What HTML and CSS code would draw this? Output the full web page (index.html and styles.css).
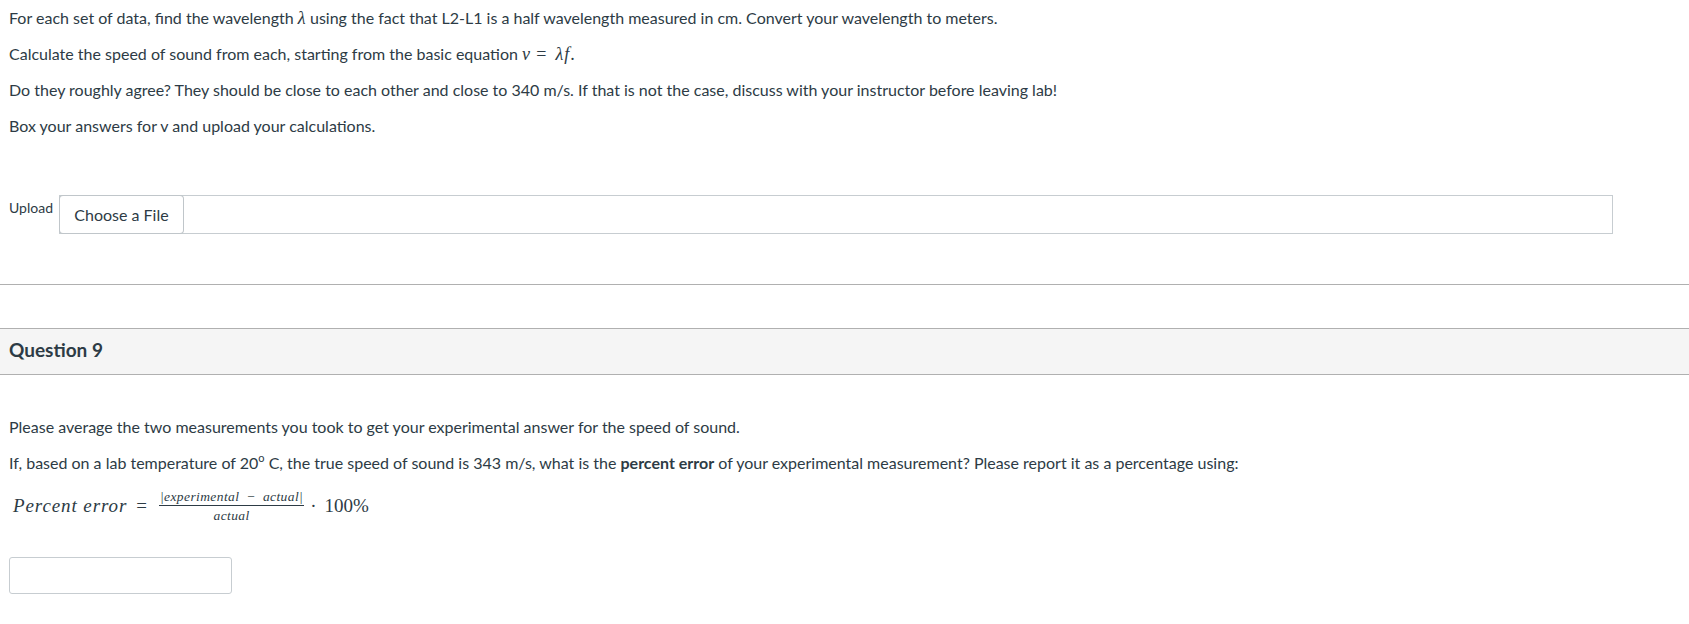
FILE: index.html
```html
<!DOCTYPE html>
<html>
<head>
<meta charset="utf-8">
<link rel="stylesheet" href="styles.css">
</head>
<body>
<div class="q8">
  <div class="text">
    <p>For each set of data, find the wavelength <span class="m">λ</span> using the fact that L2-L1 is a half wavelength measured in cm. Convert your wavelength to meters.</p>
    <p>Calculate the speed of sound from each, starting from the basic equation <span class="m">v</span><span class="mo">=</span><span class="m lam">λf</span><span class="mn">.</span></p>
    <p>Do they roughly agree? They should be close to each other and close to 340 m/s. If that is not the case, discuss with your instructor before leaving lab!</p>
    <p>Box your answers for v and upload your calculations.</p>
  </div>
  <div class="upload">
    <span class="upload-label">Upload</span>
    <div class="file-box">
      <span class="file-btn">Choose a File</span>
    </div>
  </div>
</div>
<hr class="sep">
<div class="qhead">Question 9</div>
<div class="q9">
  <div class="text">
    <p>Please average the two measurements you took to get your experimental answer for the speed of sound.</p>
    <p>If, based on a lab temperature of 20<sup>o</sup> C, the true speed of sound is 343 m/s, what is the <b>percent error</b> of your experimental measurement? Please report it as a percentage using:</p>
  </div>
  <div class="formula">
    <span class="m big">Percent error</span><span class="mo big eq">=</span><span class="frac"><span class="num m">|experimental <span class="minus">−</span> actual|</span><span class="den m">actual</span></span><span class="mn big dot">·</span><span class="mn big">100%</span>
  </div>
  <div class="answer"></div>
</div>
</body>
</html>
```
FILE: styles.css
```css
html, body {
  margin: 0;
  padding: 0;
  background: #ffffff;
}
body {
  font-family: Lato, "Open Sans", sans-serif;
  font-size: 16px;
  line-height: 24px;
  color: #2d3b45;
}
.q8 {
  padding: 6px 9px 0 9px;
}
.text {
  display: flex;
  flex-direction: column;
  gap: 12px;
}
.text p {
  margin: 0;
}
.m {
  font-family: "Liberation Serif", "DejaVu Serif", serif;
  font-style: italic;
  font-size: 18px;
  letter-spacing: 0.3px;
}
.mo, .mn {
  font-family: "Liberation Serif", "DejaVu Serif", serif;
  font-size: 18px;
}
.mo {
  margin: 0 9px 0 6px;
}
.lam {
  letter-spacing: 1px;
}
.upload {
  display: flex;
  align-items: flex-start;
  margin-top: 57px;
}
.upload-label {
  font-size: 14px;
  line-height: 14px;
  width: 50px;
  padding-top: 6px;
}
.file-box {
  flex: 0 0 1552px;
  height: 37px;
  border: 1px solid #c7cdd1;
  display: flex;
}
.file-btn {
  display: flex;
  align-items: center;
  justify-content: center;
  width: 123px;
  height: 37px;
  border-radius: 3px;
  box-shadow: 0 0 0 1px #c0c6ca;
  font-size: 16px;
  color: #2d3b45;
}
.sep {
  margin: 50px 0 0 0;
  border: 0;
  border-top: 1px solid #b0b0b0;
  height: 0;
}
.qhead {
  margin-top: 43px;
  height: 45px;
  border-top: 1px solid #b0b0b0;
  border-bottom: 1px solid #b0b0b0;
  background: #f5f5f5;
  padding: 0 9px 3px 9px;
  box-sizing: border-box;
  height: 47px;
  display: flex;
  align-items: center;
  font-size: 19px;
  font-weight: 700;
  color: #2d3b45;
}
.q9 {
  padding: 40px 9px 0 9px;
}
.q9 sup {
  font-size: 11px;
  line-height: 0;
  vertical-align: 7px;
}
.formula {
  margin-top: 19px;
  height: 40px;
  padding-left: 4px;
  display: flex;
  align-items: baseline;
  line-height: 24px;
}
.big {
  font-size: 19px;
}
.formula .m.big {
  letter-spacing: 0.9px;
}
.eq {
  margin: 0 12px 0 9px;
}
.frac {
  display: inline-flex;
  flex-direction: column;
  align-items: center;
  position: relative;
  top: -11px;
}
.num {
  font-size: 13.5px;
  line-height: 13px;
  letter-spacing: 0.4px;
  padding: 0 1px 2px;
  border-bottom: 1px solid #2d3b45;
}
.minus {
  font-style: normal;
  margin: 0 4px;
}
.den {
  font-size: 13.5px;
  line-height: 13px;
  letter-spacing: 0.4px;
  padding-top: 3px;
}
.dot {
  margin: 0 8px 0 6px;
}
.answer {
  margin-top: 23px;
  width: 221px;
  height: 35px;
  border: 1px solid #c7cdd1;
  border-radius: 3px;
}
```
